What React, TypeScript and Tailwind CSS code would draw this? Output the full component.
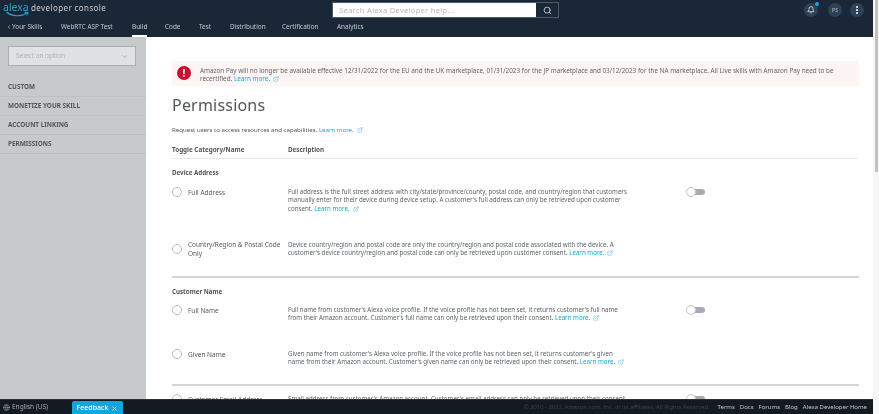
import React from "react";
import { ChevronDown, ChevronLeft, Search, Bell, ExternalLink, Globe, X } from "lucide-react";

function Learn({ text = "Learn more." }: { text?: string }) {
  return (
    <span className="text-[#1aa5cf]">
      {text}
      <ExternalLink className="inline-block w-[6px] h-[6px] ml-[3px] align-[-1px]" strokeWidth={1.5} />
    </span>
  );
}

function Toggle() {
  return (
    <div className="relative w-[20px] h-[10px]">
      <div className="absolute left-[5px] top-[2px] w-[14px] h-[6px] rounded-full bg-[#a9aab3]" />
      <div className="absolute left-0 top-0 w-[10px] h-[10px] rounded-full bg-white border border-[#c6c8cc]" />
    </div>
  );
}

function Row({ label, children, toggle, className }: { label: React.ReactNode; children: React.ReactNode; toggle?: boolean; className: string }) {
  return (
    <div className={`flex ${className}`}>
      <div className="w-[116px] shrink-0">
        <div className="flex items-center min-h-[10px]">
          <div className="w-[10px] h-[10px] rounded-full border border-[#b9bcbf] shrink-0" />
          <div className="ml-[6px] text-[6.5px] leading-[9px] text-[#555b60]">{label}</div>
        </div>
      </div>
      <div className="w-[341px] shrink-0 mt-[1px] text-[6.2px] leading-[8.3px] text-[#5f6468]">{children}</div>
      <div className="ml-[57px]">{toggle && <Toggle />}</div>
    </div>
  );
}

export default function App() {
  const tabs = [
    { t: "Build", w: "w-[33px]" },
    { t: "Code", w: "w-[34px]" },
    { t: "Test", w: "w-[31px]" },
    { t: "Distribution", w: "w-[52px]" },
    { t: "Certification", w: "w-[55px]" },
    { t: "Analytics", w: "" },
  ];
  return (
    <div className="w-[879px] h-[414px] flex overflow-hidden bg-white font-['Noto_Sans',sans-serif] blur-[0.35px]">
      <div className="w-[873px] h-full flex flex-col">
        <header className="h-[37px] shrink-0 bg-[#1a2736] flex flex-col">
          <div className="h-[19px] flex items-center shrink-0">
            <div className="relative w-[28px] ml-[3px] h-[17px]">
              <span className="absolute left-[0px] top-[-1px] text-[10.5px] leading-[14px] text-[#2f9fd6]">alexa</span>
              <svg className="absolute left-[3px] top-[10px]" width="24" height="7" viewBox="0 0 24 7" fill="none">
                <path d="M1 1.5C6 5.5 15 6 21 2" stroke="#2f9fd6" strokeWidth="1.2" strokeLinecap="round" />
                <path d="M18.5 1.2L22 1.4L21 4.4" stroke="#2f9fd6" strokeWidth="1" />
              </svg>
            </div>
            <span className="text-[8px] tracking-[0.4px] text-[#c9cdd1] leading-[10px] mt-[-4px]">developer console</span>
            <div className="ml-[226px] mt-[1px] w-[227px] h-[16px] flex border border-[#4a5a68]">
              <div className="w-[203px] bg-white text-[7.5px] leading-[14px] pl-[6px] text-[#b4b8bb] tracking-[0.3px]">Search Alexa Developer help...</div>
              <div className="flex-1 flex items-center justify-center">
                <Search className="w-[9px] h-[9px] text-[#e8eaec]" strokeWidth={2} />
              </div>
            </div>
            <div className="ml-auto flex items-center mr-[9px]">
              <div className="relative w-[14px] h-[14px] rounded-full bg-[#2d4257] flex items-center justify-center">
                <Bell className="w-[8px] h-[8px] text-white" strokeWidth={2} />
                <div className="absolute right-[-1px] top-[-1px] w-[4px] h-[4px] rounded-full bg-[#1aa5e6]" />
              </div>
              <div className="ml-[10px] w-[14px] h-[14px] rounded-full bg-[#2d4257] text-[5px] leading-[14px] text-center text-[#b8c0c8]">PS</div>
              <div className="ml-[8px] w-[14px] h-[14px] rounded-full bg-[#2d4257] flex flex-col items-center justify-center gap-[1px]">
                <i className="w-[2px] h-[2px] bg-white rounded-full" />
                <i className="w-[2px] h-[2px] bg-white rounded-full" />
                <i className="w-[2px] h-[2px] bg-white rounded-full" />
              </div>
            </div>
          </div>
          <nav className="flex-1 flex text-[6.4px] leading-[15px] text-[#c4c9ce]">
            <div className="w-[61px] pl-[6px] flex items-center h-[15px]">
              <ChevronLeft className="w-[6px] h-[6px]" strokeWidth={2.5} />
              <span>Your Skills</span>
            </div>
            <div className="w-[71px] h-[15px]">WebRTC ASP Test</div>
            {tabs.map(({ t, w }, i) => (
              <div key={t} className={w}>
                <span className={`inline-block h-[18px] ${i === 0 ? "border-b-[2px] border-white" : ""}`}>{t}</span>
              </div>
            ))}
          </nav>
        </header>

        <div className="flex-1 min-h-0 flex overflow-hidden">
          <aside className="w-[146px] shrink-0 bg-[#c6caca]">
            <div className="mt-[9px] mx-[8px] w-[128px] h-[20px] bg-[#dfe2e2] border border-[#a9aeae] flex items-center justify-between px-[7px] text-[6.5px] text-[#aeb3b3]">
              <span>Select an option</span>
              <ChevronDown className="w-[7px] h-[7px] text-[#888d8d]" />
            </div>
            <div className="mt-[12px] text-[6.4px] font-bold text-[#50565a]">
              {["CUSTOM", "MONETIZE YOUR SKILL", "ACCOUNT LINKING", "PERMISSIONS"].map((s) => (
                <div key={s} className="h-[19px] leading-[18px] pl-[8px] border-b border-[#bcc0c0]">{s}</div>
              ))}
            </div>
          </aside>

          <main className="flex-1 min-w-0 overflow-hidden pl-[26px] pr-[14px]">
            <div className="mt-[24px] h-[25px] bg-[#fdf5f4] flex pl-[5px] pr-[20px]">
              <div className="mt-[5px] w-[14px] h-[14px] rounded-full bg-[#c8102e] text-white text-[10px] font-bold leading-[14px] text-center shrink-0">!</div>
              <div className="ml-[9px] pt-[6px] text-[6.35px] leading-[8px] text-[#5f6468]">
                Amazon Pay will no longer be available effective 12/31/2022 for the EU and the UK marketplace, 01/31/2023 for the JP marketplace and 03/12/2023 for the NA marketplace. All Live skills with Amazon Pay need to be recertified. <Learn />
              </div>
            </div>

            <h1 className="mt-[8px] text-[16px] leading-[22px] text-[#50565a] tracking-[0.2px]">Permissions</h1>
            <p className="mt-[9px] text-[6.1px] leading-[9px] text-[#50565a]">
              Request users to access resources and capabilities. <Learn />
            </p>

            <div className="mt-[11px] h-[14px] flex text-[6.3px] font-bold leading-[9px] text-[#50565a] border-b border-[#e6e7e8]">
              <div className="w-[116px]">Toggle Category/Name</div>
              <div>Description</div>
            </div>

            <div className="mt-[9px] text-[6.2px] font-bold leading-[9px] text-[#50565a]">Device Address</div>
            <Row className="mt-[10px] h-[53px]" toggle label="Full Address">
              Full address is the full street address with city/state/province/county, postal code, and country/region that customers manually enter for their device during device setup. A customer's full address can only be retrieved upon customer consent. <Learn />
            </Row>
            <Row className="h-[36px]" label={<span className="block w-[96px]">Country/Region &amp; Postal Code Only</span>}>
              Device country/region and postal code are only the country/region and postal code associated with the device. A customer's device country/region and postal code can only be retrieved upon customer consent. <Learn />
            </Row>

            <div className="border-t-2 border-[#d3d4d5]" />
            <div className="mt-[9px] text-[6.2px] font-bold leading-[9px] text-[#50565a]">Customer Name</div>
            <Row className="mt-[9px] h-[44px]" toggle label="Full Name">
              Full name from customer's Alexa voice profile. If the voice profile has not been set, it returns customer's full name from their Amazon account. Customer's full name can only be retrieved upon their consent. <Learn />
            </Row>
            <Row className="h-[35px]" label="Given Name">
              Given name from customer's Alexa voice profile. If the voice profile has not been set, it returns customer's given name from their Amazon account. Customer's given name can only be retrieved upon their consent. <Learn />
            </Row>
            <div className="border-t-2 border-[#d3d4d5]" />
            <Row className="mt-[8px] h-[30px]" toggle label="Customer Email Address">
              Email address from customer's Amazon account. Customer's email address can only be retrieved upon their consent.
            </Row>
          </main>
        </div>

        <footer className="h-[15px] shrink-0 bg-[#131a22] relative flex items-center text-[6px] border-t border-[#2a3038]">
          <Globe className="ml-[3px] w-[7px] h-[7px] text-[#9aa0a6]" />
          <span className="ml-[2px] text-[#a8adb2] text-[6.5px]">English (US)</span>
          <div className="absolute left-[72px] top-[1px] w-[51px] h-[14px] bg-[#12a5e0] rounded-t-[2px] flex items-center justify-center gap-[3px] text-white text-[7px] font-medium">
            Feedback <X className="w-[7px] h-[7px]" strokeWidth={2.5} />
          </div>
          <span className="ml-auto text-[#3d444c] text-[5.8px]">© 2010 - 2023, Amazon.com, Inc. or its affiliates. All Rights Reserved.</span>
          <div className="ml-[8px] mr-[6px] flex gap-[5px] text-[#c7cbd0]">
            <span>Terms</span><span>Docs</span><span>Forums</span><span>Blog</span><span>Alexa Developer Home</span>
          </div>
        </footer>
      </div>
      <div className="w-[6px] h-full bg-[#f7f7f7] relative">
        <div className="absolute left-[2px] top-0 w-[3px] h-[172px] bg-[#c1c1c1]" />
      </div>
    </div>
  );
}
